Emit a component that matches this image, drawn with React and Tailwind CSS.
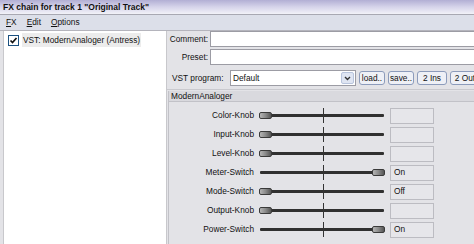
import React from "react";

const PARAMS = [
  { name: "Color-Knob", pos: "left", value: "" },
  { name: "Input-Knob", pos: "left", value: "" },
  { name: "Level-Knob", pos: "left", value: "" },
  { name: "Meter-Switch", pos: "right", value: "On" },
  { name: "Mode-Switch", pos: "left", value: "Off" },
  { name: "Output-Knob", pos: "left", value: "" },
  { name: "Power-Switch", pos: "right", value: "On" },
];

export default function App() {
  return (
    <div className="w-[474px] h-[244px] overflow-hidden bg-[#e3e3e7] text-[8.3px] leading-none text-[#111] font-['Liberation_Sans',Arial,sans-serif] flex flex-col">
      {/* title bar */}
      <div className="h-[14px] shrink-0 flex items-center pl-[3px] bg-gradient-to-b from-[#b2afd4] via-[#d6d4ea] to-[#f2f2f8]">
        <span className="font-bold text-[8.5px] text-[#111]">FX chain for track 1 "Original Track"</span>
      </div>
      <div className="h-[1px] shrink-0 bg-[#a8a8b2]" />

      {/* menu */}
      <div className="h-[16px] shrink-0 flex items-center bg-[#dcdfe9] border-b border-[#b4b4bc] pl-[6px] gap-[10px]">
        <span><u>F</u>X</span>
        <span><u>E</u>dit</span>
        <span><u>O</u>ptions</span>
      </div>

      <div className="flex flex-1 min-h-0">
        {/* fx list */}
        <div className="w-[167px] shrink-0 flex pl-[3px] bg-[#e3e3e7]">
          <div className="flex-1 bg-white border-l border-[#9a9aa2] border-r border-[#c8c8cc] pl-[4px] pt-[2px]">
            <div className="flex items-center gap-[3px] h-[14px]">
              <div className="w-[11px] h-[11px] border border-[#1c5180] bg-white flex items-center justify-center">
                <svg width="9" height="9" viewBox="0 0 9 9">
                  <path d="M1.5 4.5 L3.5 6.5 L7.5 2" stroke="#111" strokeWidth="1.7" fill="none" />
                </svg>
              </div>
              <span className="bg-[#ececec] px-[1px] py-[3px]">VST: ModernAnaloger (Antress)</span>
            </div>
          </div>
        </div>

        {/* right side */}
        <div className="flex-1 flex flex-col">
          <div className="flex items-center h-[16px]">
            <span className="w-[43px] text-right pr-[2px]">Comment:</span>
            <div className="flex-1 h-full bg-white border border-[#9c9ca4]" />
          </div>
          <div className="flex items-center h-[16px] mt-[2px]">
            <span className="w-[43px] text-right pr-[2px]">Preset:</span>
            <div className="flex-1 h-full bg-white border border-[#9c9ca4]" />
          </div>
          <div className="flex items-center h-[16px] mt-[5px] pl-[5px]">
            <span className="w-[58px]">VST program:</span>
            <div className="w-[126px] h-full bg-white border border-[#9c9ca4] flex items-center">
              <span className="flex-1 pl-[2px]">Default</span>
              <div className="w-[13px] h-[12px] mr-[1px] rounded-[2px] bg-[#dfe5f2] border border-[#b8c4dc] flex items-center justify-center">
                <svg width="7" height="5" viewBox="0 0 7 5">
                  <path d="M1 1 L3.5 3.5 L6 1" stroke="#333" strokeWidth="1.4" fill="none" />
                </svg>
              </div>
            </div>
            <div className="flex gap-[3px] ml-[3px]">
              <Btn w="w-[26px]">load..</Btn>
              <Btn w="w-[26px]">save..</Btn>
              <Btn w="w-[30px]">2 Ins</Btn>
              <Btn w="w-[30px]">2 Out</Btn>
            </div>
          </div>
          <div className="h-[1px] bg-[#c9c9ce] mt-[3px]" />
          <div className="flex-1 flex flex-col border-l border-[#c2c2c8] ml-[1px] mt-[1px]">
            <div className="h-[11px] flex items-center pl-[2px] bg-[#d9d9de] border-b border-[#c2c2c8]">
              ModernAnaloger
            </div>
            <div className="flex flex-col pt-[4px]">
              {PARAMS.map((p) => (
                <ParamRow key={p.name} {...p} />
              ))}
            </div>
          </div>
        </div>
      </div>
    </div>
  );
}

function Btn({ w, children }) {
  return (
    <div className={`${w} h-[14px] shrink-0 flex items-center justify-center rounded-[3px] bg-[#eef0f6] border border-[#8c9bbb] whitespace-nowrap overflow-hidden`}>
      {children}
    </div>
  );
}

function ParamRow({ name, pos, value }) {
  return (
    <div className="h-[19px] flex items-center">
      <span className="w-[90px] text-right pr-[5px]">{name}</span>
      <div className="relative w-[128px] h-[19px] flex items-center">
        <div className="w-[124px] h-[3px] bg-[#303030] rounded-[1px] ml-[1px]" />
        <div className="absolute left-[64px] top-[2px] w-[1px] h-[15px] bg-[#333]" />
        <div
          className={`absolute top-[6px] w-[13px] h-[7px] rounded-[2px] border border-[#3a3a3a] bg-gradient-to-r from-[#b5b5b5] via-[#8a8a8a] to-[#555] ${
            pos === "left" ? "left-0" : "left-[113px]"
          }`}
        />
      </div>
      <div className="w-[44px] h-[16px] ml-[3px] border border-[#bcbcc2] bg-[#e6e6ea] flex items-center pl-[3px]">
        {value}
      </div>
    </div>
  );
}
